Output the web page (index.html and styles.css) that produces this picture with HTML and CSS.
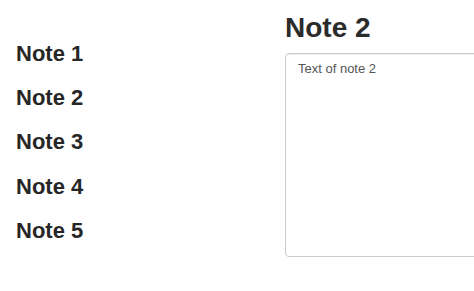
FILE: index.html
```html
<!DOCTYPE html>
<html>
<head>
<meta charset="utf-8">
<link rel="stylesheet" href="styles.css">
</head>
<body>
<div class="app">
  <ul class="note-list">
    <li class="note-item">Note 1</li>
    <li class="note-item">Note 2</li>
    <li class="note-item">Note 3</li>
    <li class="note-item">Note 4</li>
    <li class="note-item">Note 5</li>
  </ul>
  <div class="note-view">
    <h2 class="note-title">Note 2</h2>
    <textarea class="note-body">Text of note 2</textarea>
  </div>
</div>
</body>
</html>
```
FILE: styles.css
```css
html, body {
  margin: 0;
  padding: 0;
  overflow: hidden;
  background: #fff;
}
body {
  font-family: "Liberation Sans", Arial, Helvetica, sans-serif;
  color: #333;
}
.app {
  display: flex;
  width: 100%;
  overflow: hidden;
}
.note-list {
  list-style: none;
  margin: 0;
  padding: 42px 0 0 16px;
  width: 269px;
  flex: none;
  display: flex;
  flex-direction: column;
  gap: 20.2px;
}
.note-item {
  font-size: 22px;
  font-weight: bold;
  line-height: 24px;
  color: #262626;
}
.note-view {
  flex: 1;
  min-width: 0;
  overflow: hidden;
  display: flex;
  flex-direction: column;
  padding-top: 12px;
}
.note-title {
  margin: 0 0 10px 0;
  font-size: 28px;
  line-height: 31px;
  font-weight: bold;
  color: #2b2b2b;
}
.note-body {
  box-sizing: border-box;
  width: calc(100% + 10px);
  height: 204px;
  margin: 0;
  padding: 6px 12px;
  font-family: "Liberation Sans", Arial, Helvetica, sans-serif;
  font-size: 13px;
  line-height: 18.5px;
  color: #555;
  border: 1px solid #ccc;
  border-radius: 4px;
  box-shadow: inset 0 1px 1px rgba(0,0,0,0.075);
  resize: none;
  outline: none;
}
```
